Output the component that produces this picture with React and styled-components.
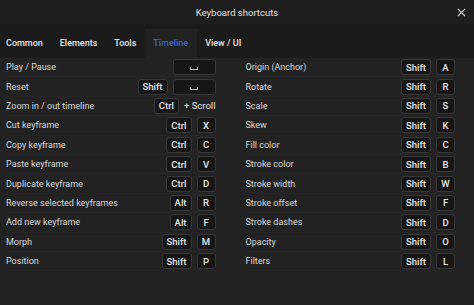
import React from 'react';
import styled, { createGlobalStyle } from 'styled-components';

const GlobalStyle = createGlobalStyle`
  html, body {
    margin: 0;
    padding: 0;
    background: #222222;
  }
  body {
    font-family: Roboto, "Liberation Sans", Arial, sans-serif;
    -webkit-font-smoothing: antialiased;
  }
`;

const Dialog = styled.div`
  width: 474px;
  height: 305px;
  background: #222222;
  display: flex;
  flex-direction: column;
  overflow: hidden;
`;

const Header = styled.div`
  height: 24px;
  flex: none;
  display: flex;
  align-items: center;
  justify-content: center;
  position: relative;
  background: #1e1e1e;
  color: #e0e0e0;
  font-size: 9.5px;
`;

const CloseButton = styled.button`
  position: absolute;
  right: 5px;
  top: 4px;
  width: 16px;
  height: 16px;
  padding: 0;
  border: none;
  background: none;
  display: flex;
  align-items: center;
  justify-content: center;
  cursor: pointer;
`;

const TabBar = styled.div`
  height: 34px;
  flex: none;
  display: flex;
  align-items: flex-end;
  background: #1b1b1b;
`;

const Tab = styled.div`
  height: 29px;
  display: flex;
  align-items: center;
  padding: 0 8.5px 2px;
  box-sizing: border-box;
  font-size: 9px;
  font-weight: 500;
  color: ${(p) => (p.active ? '#3563cf' : '#e6e6e6')};
  background: ${(p) => (p.active ? '#222222' : 'transparent')};
  &:first-child {
    padding-left: 6px;
  }
`;

const Body = styled.div`
  flex: 1;
  display: grid;
  grid-template-columns: 1fr 1fr;
  column-gap: 30px;
  padding: 0 19px 0 6px;
  align-content: start;
`;

const Column = styled.div`
  display: flex;
  flex-direction: column;
`;

const Row = styled.div`
  height: 19.4px;
  display: flex;
  align-items: center;
  justify-content: space-between;
  border-bottom: 1px solid #262626;
  box-sizing: border-box;
`;

const Label = styled.span`
  font-size: 9px;
  color: #dadada;
`;

const Keys = styled.div`
  display: flex;
  align-items: center;
  gap: 5px;
`;

const Key = styled.span`
  box-sizing: border-box;
  height: 16px;
  min-width: ${(p) => (p.wide ? '43px' : '19px')};
  padding: 0 4px;
  display: inline-flex;
  align-items: center;
  justify-content: center;
  background: #161616;
  border: 1px solid #383838;
  border-radius: 3px;
  font-size: 9.5px;
  font-weight: 500;
  color: #e6e6e6;
`;

const SpaceGlyph = styled.span`
  display: block;
  width: 6px;
  height: 2px;
  margin-top: 3px;
  border: 1px solid #bdbdbd;
  border-top: none;
`;

const Extra = styled.span`
  font-size: 9.5px;
  color: #e2e2e2;
`;

const tabs = ['Common', 'Elements', 'Tools', 'Timeline', 'View / UI'];

const left = [
  ['Play / Pause', ['space']],
  ['Reset', ['Shift', 'space']],
  ['Zoom in / out timeline', ['Ctrl'], '+ Scroll'],
  ['Cut keyframe', ['Ctrl', 'X']],
  ['Copy keyframe', ['Ctrl', 'C']],
  ['Paste keyframe', ['Ctrl', 'V']],
  ['Duplicate keyframe', ['Ctrl', 'D']],
  ['Reverse selected keyframes', ['Alt', 'R']],
  ['Add new keyframe', ['Alt', 'F']],
  ['Morph', ['Shift', 'M']],
  ['Position', ['Shift', 'P']],
];

const right = [
  ['Origin (Anchor)', ['Shift', 'A']],
  ['Rotate', ['Shift', 'R']],
  ['Scale', ['Shift', 'S']],
  ['Skew', ['Shift', 'K']],
  ['Fill color', ['Shift', 'C']],
  ['Stroke color', ['Shift', 'B']],
  ['Stroke width', ['Shift', 'W']],
  ['Stroke offset', ['Shift', 'F']],
  ['Stroke dashes', ['Shift', 'D']],
  ['Opacity', ['Shift', 'O']],
  ['Filters', ['Shift', 'L']],
];

const ShortcutRow = ({ label, keys, extra }) => (
  <Row>
    <Label>{label}</Label>
    <Keys>
      {keys.map((k, i) =>
        k === 'space' ? (
          <Key key={i} wide>
            <SpaceGlyph />
          </Key>
        ) : (
          <Key key={i}>{k}</Key>
        )
      )}
      {extra && <Extra>{extra}</Extra>}
    </Keys>
  </Row>
);

export default function App() {
  return (
    <>
      <GlobalStyle />
      <Dialog>
        <Header>
          Keyboard shortcuts
          <CloseButton aria-label="Close">
            <svg width="9" height="9" viewBox="0 0 10 10">
              <path d="M1 1L9 9M9 1L1 9" stroke="#d8d8d8" strokeWidth="1.3" />
            </svg>
          </CloseButton>
        </Header>
        <TabBar>
          {tabs.map((t) => (
            <Tab key={t} active={t === 'Timeline'}>
              {t}
            </Tab>
          ))}
        </TabBar>
        <Body>
          <Column>
            {left.map(([l, k, e]) => (
              <ShortcutRow key={l} label={l} keys={k} extra={e} />
            ))}
          </Column>
          <Column>
            {right.map(([l, k, e]) => (
              <ShortcutRow key={l} label={l} keys={k} extra={e} />
            ))}
          </Column>
        </Body>
      </Dialog>
    </>
  );
}
